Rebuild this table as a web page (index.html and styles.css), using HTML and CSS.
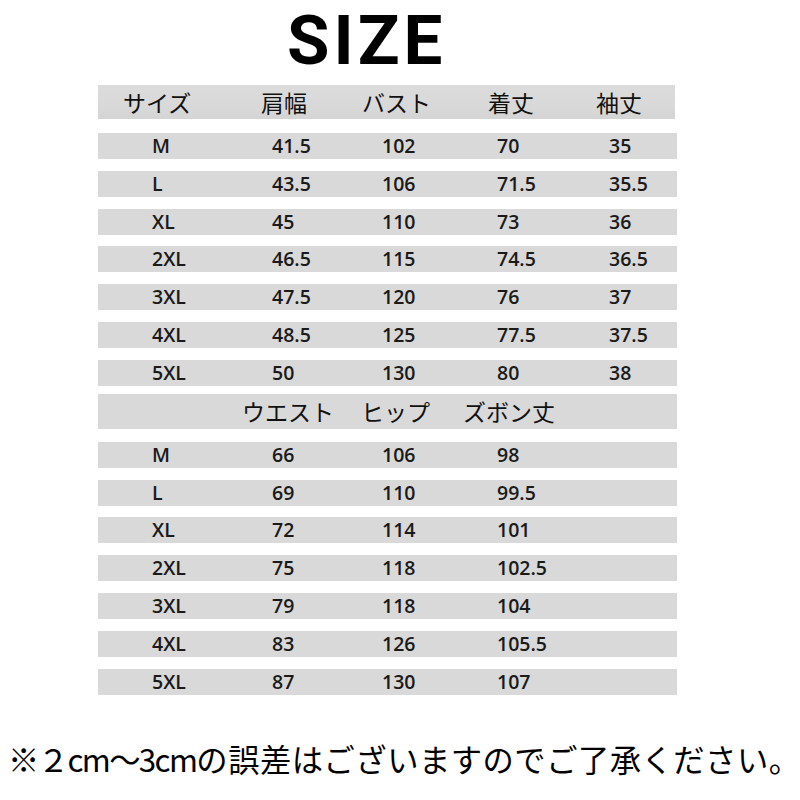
FILE: index.html
```html
<!DOCTYPE html>
<html lang="ja">
<head>
<meta charset="utf-8">
<title>SIZE</title>
<link rel="stylesheet" href="styles.css">
</head>
<body>
<div class="page">
  <h1 class="title">SIZE</h1>

  <div class="table">
    <div class="row head head-top">
      <span>サイズ</span><span>肩幅</span><span>バスト</span><span>着丈</span><span>袖丈</span>
    </div>
    <div class="rows">
      <div class="row data"><span>M</span><span>41.5</span><span>102</span><span>70</span><span>35</span></div>
      <div class="row data"><span>L</span><span>43.5</span><span>106</span><span>71.5</span><span>35.5</span></div>
      <div class="row data"><span>XL</span><span>45</span><span>110</span><span>73</span><span>36</span></div>
      <div class="row data"><span>2XL</span><span>46.5</span><span>115</span><span>74.5</span><span>36.5</span></div>
      <div class="row data"><span>3XL</span><span>47.5</span><span>120</span><span>76</span><span>37</span></div>
      <div class="row data"><span>4XL</span><span>48.5</span><span>125</span><span>77.5</span><span>37.5</span></div>
      <div class="row data"><span>5XL</span><span>50</span><span>130</span><span>80</span><span>38</span></div>
    </div>

    <div class="row head head-bottom">
      <span></span><span>ウエスト</span><span>ヒップ</span><span>ズボン丈</span><span></span>
    </div>
    <div class="rows">
      <div class="row data"><span>M</span><span>66</span><span>106</span><span>98</span><span></span></div>
      <div class="row data"><span>L</span><span>69</span><span>110</span><span>99.5</span><span></span></div>
      <div class="row data"><span>XL</span><span>72</span><span>114</span><span>101</span><span></span></div>
      <div class="row data"><span>2XL</span><span>75</span><span>118</span><span>102.5</span><span></span></div>
      <div class="row data"><span>3XL</span><span>79</span><span>118</span><span>104</span><span></span></div>
      <div class="row data"><span>4XL</span><span>83</span><span>126</span><span>105.5</span><span></span></div>
      <div class="row data"><span>5XL</span><span>87</span><span>130</span><span>107</span><span></span></div>
    </div>
  </div>

  <p class="note"><span class="note-lead">※２cm～3cm</span><span class="note-rest">の誤差はございますのでご了承ください。</span></p>
</div>
</body>
</html>
```

FILE: styles.css
```css
html, body {
  margin: 0;
  padding: 0;
  background: #ffffff;
}

.page {
  width: 800px;
  height: 800px;
  display: flex;
  flex-direction: column;
  color: #111111;
}

.title {
  margin: 0;
  padding: 0 0 0 287px;
  height: 83px;
  box-sizing: border-box;
  font-family: "Roboto", "Liberation Sans", sans-serif;
  font-weight: 700;
  font-size: 69px;
  line-height: normal;
  letter-spacing: 4px;
  color: #000000;
}

.table {
  margin-left: 98px;
  width: 579px;
  display: flex;
  flex-direction: column;
}

.row {
  display: grid;
  align-items: center;
  background: #d9d9d9;
}

.head {
  font-family: "Noto Sans CJK JP", sans-serif;
  font-weight: 400;
  font-size: 23px;
  color: #111111;
  line-height: 1;
}

.head-top {
  margin-top: 2px;
  width: 577px;
  height: 34px;
  grid-template-columns: 25px 138px 101px 126px 108px 1fr;
  background: linear-gradient(180deg, #dcdcdc 0%, #d8d8d8 70%, #d4d4d4 100%);
}
.head-top span:nth-child(1) { grid-column: 2; }

.head-bottom {
  margin-top: 8px;
  height: 35px;
  grid-template-columns: 144px 119px 102px 1fr 0;
}

.rows {
  display: flex;
  flex-direction: column;
  gap: 11.8px;
  margin-top: 14px;
}
.head-bottom + .rows { margin-top: 13px; }

.data {
  height: 26px;
  grid-template-columns: 54px 120px 110px 115px 112px 1fr;
  font-family: "Open Sans", "Liberation Sans", sans-serif;
  font-weight: 600;
  font-size: 19.5px;
  line-height: 26px;
  color: #1a1a1a;
}
.data span:nth-child(1) { grid-column: 2; }

.note {
  margin: 46px 0 0 8px;
  font-family: "Noto Sans CJK JP", sans-serif;
  font-size: 31.3px;
  line-height: 36px;
  font-weight: 400;
  color: #000000;
  white-space: nowrap;
}

.note-lead {
  letter-spacing: -1.6px;
}

.note-rest {
  letter-spacing: 0.5px;
}
```
